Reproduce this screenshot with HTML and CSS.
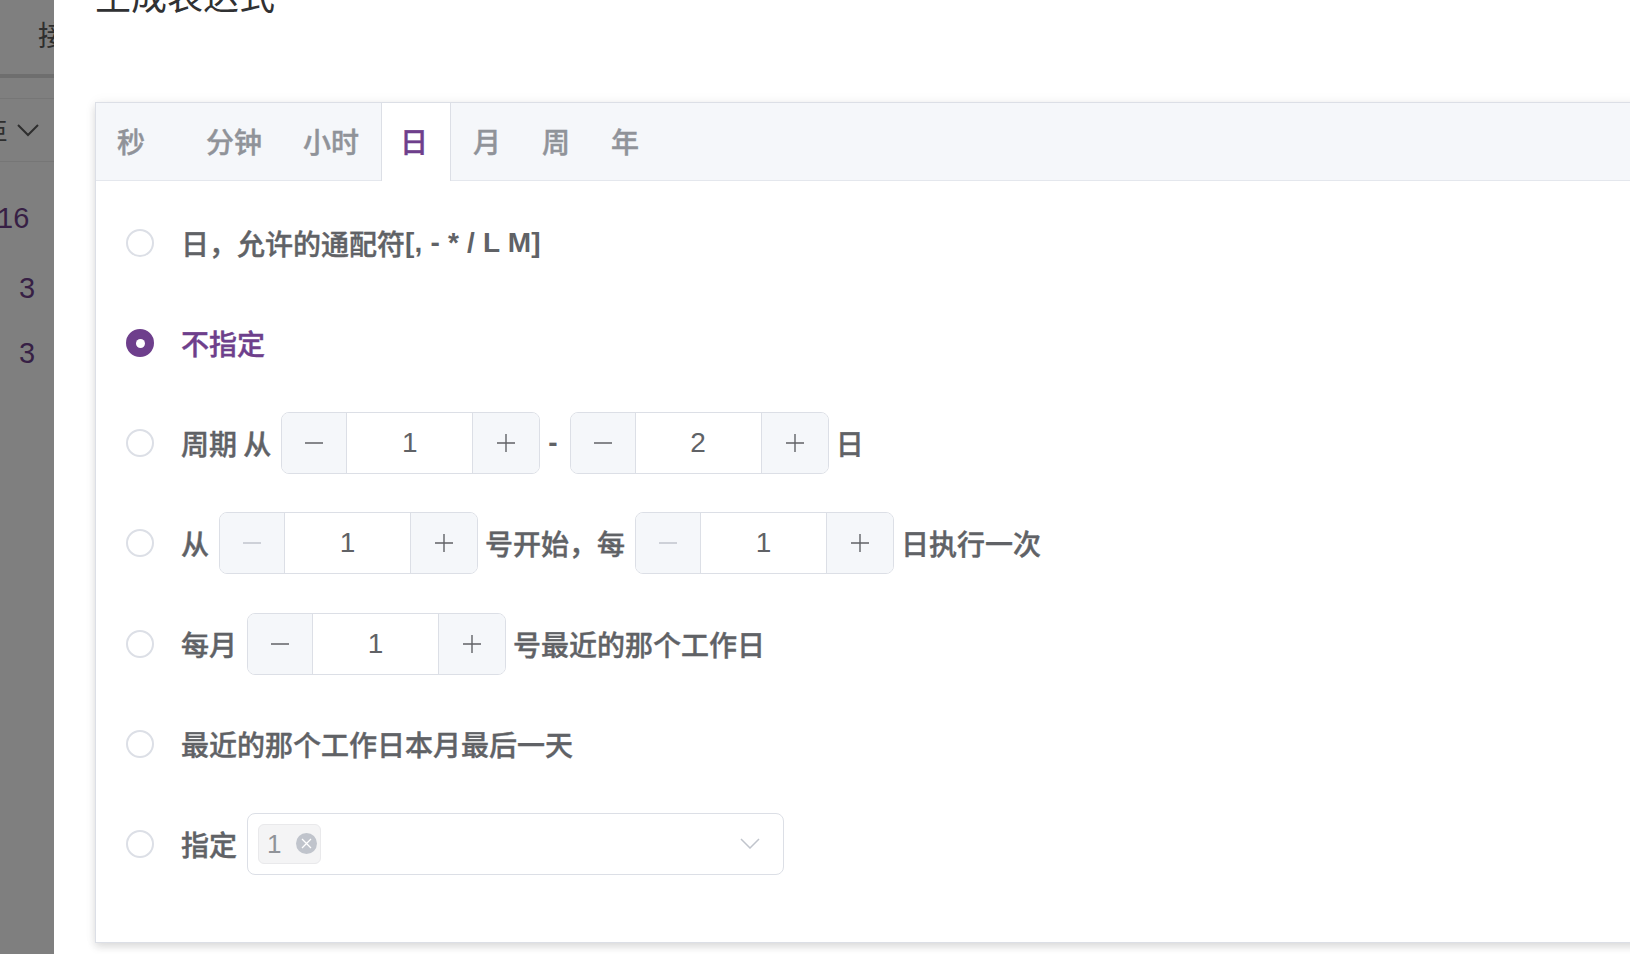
FILE: index.html
```html
<!DOCTYPE html>
<html lang="zh-CN">
<head>
<meta charset="utf-8">
<title>生成表达式</title>
<link rel="stylesheet" href="styles.css">
</head>
<body>
<div class="screen">
  <aside class="under">
    <div class="under-top"><span class="under-op">接口</span></div>
    <div class="under-rule"></div>
    <div class="under-select">
      <span class="under-cut">臣</span>
      <svg class="under-chev" width="22" height="13" viewBox="0 0 22 13"><polyline points="1,1 11,11 21,1" fill="none" stroke="#2e2e2e" stroke-width="2"/></svg>
    </div>
    <div class="under-num n1">16</div>
    <div class="under-num n2">3</div>
    <div class="under-num n3">3</div>
  </aside>

  <main class="drawer">
    <h2 class="drawer-title">生成表达式</h2>
    <section class="card">
      <nav class="tabs">
        <div class="tab tab-first">秒</div>
        <div class="tab">分钟</div>
        <div class="tab tab-before">小时</div>
        <div class="tab is-active">日</div>
        <div class="tab tab-after">月</div>
        <div class="tab">周</div>
        <div class="tab">年</div>
      </nav>
      <div class="pane">
        <div class="row">
          <span class="radio"></span>
          <span class="label">日，允许的通配符<span class="latin wide">[, - * / L M]</span></span>
        </div>
        <div class="row">
          <span class="radio is-checked"></span>
          <span class="label is-checked">不指定</span>
        </div>
        <div class="row">
          <span class="radio"></span>
          <span class="label">
            <span>周期 从</span>
            <span class="num"><span class="num-btn num-dec"><svg width="20" height="20" viewBox="0 0 20 20"><path d="M1 10h18" stroke="currentColor" stroke-width="1.4"/></svg></span><span class="num-val">1</span><span class="num-btn num-inc"><svg width="20" height="20" viewBox="0 0 20 20"><path d="M1 10h18M10 1v18" stroke="currentColor" stroke-width="1.4"/></svg></span></span>
            <span class="latin dash">-</span>
            <span class="num"><span class="num-btn num-dec"><svg width="20" height="20" viewBox="0 0 20 20"><path d="M1 10h18" stroke="currentColor" stroke-width="1.4"/></svg></span><span class="num-val">2</span><span class="num-btn num-inc"><svg width="20" height="20" viewBox="0 0 20 20"><path d="M1 10h18M10 1v18" stroke="currentColor" stroke-width="1.4"/></svg></span></span>
            <span>日</span>
          </span>
        </div>
        <div class="row">
          <span class="radio"></span>
          <span class="label">
            <span>从</span>
            <span class="num"><span class="num-btn num-dec is-disabled"><svg width="20" height="20" viewBox="0 0 20 20"><path d="M1 10h18" stroke="currentColor" stroke-width="1.4"/></svg></span><span class="num-val">1</span><span class="num-btn num-inc"><svg width="20" height="20" viewBox="0 0 20 20"><path d="M1 10h18M10 1v18" stroke="currentColor" stroke-width="1.4"/></svg></span></span>
            <span>号开始，每</span>
            <span class="num"><span class="num-btn num-dec is-disabled"><svg width="20" height="20" viewBox="0 0 20 20"><path d="M1 10h18" stroke="currentColor" stroke-width="1.4"/></svg></span><span class="num-val">1</span><span class="num-btn num-inc"><svg width="20" height="20" viewBox="0 0 20 20"><path d="M1 10h18M10 1v18" stroke="currentColor" stroke-width="1.4"/></svg></span></span>
            <span>日执行一次</span>
          </span>
        </div>
        <div class="row">
          <span class="radio"></span>
          <span class="label">
            <span>每月</span>
            <span class="num"><span class="num-btn num-dec"><svg width="20" height="20" viewBox="0 0 20 20"><path d="M1 10h18" stroke="currentColor" stroke-width="1.4"/></svg></span><span class="num-val">1</span><span class="num-btn num-inc"><svg width="20" height="20" viewBox="0 0 20 20"><path d="M1 10h18M10 1v18" stroke="currentColor" stroke-width="1.4"/></svg></span></span>
            <span>号最近的那个工作日</span>
          </span>
        </div>
        <div class="row">
          <span class="radio"></span>
          <span class="label">最近的那个工作日本月最后一天</span>
        </div>
        <div class="row">
          <span class="radio"></span>
          <span class="label">
            <span>指定</span>
            <span class="select"><span class="tag"><span class="tag-text">1</span><span class="tag-close"><svg width="11" height="11" viewBox="0 0 11 11"><path d="M1 1l9 9M10 1l-9 9" stroke="#fff" stroke-width="1.3"/></svg></span></span><svg class="select-arrow" width="20" height="11" viewBox="0 0 20 11"><polyline points="1,1 10,10 19,1" fill="none" stroke="#c0c4cc" stroke-width="1.5"/></svg></span>
          </span>
        </div>
      </div>
    </section>
  </main>
</div>
</body>
</html>
```

FILE: styles.css
```css
* {
  box-sizing: border-box;
  margin: 0;
  padding: 0;
}

html,
body {
  width: 1630px;
  height: 954px;
  overflow: hidden;
  background: #ffffff;
}

body {
  font-family: "Liberation Sans", "Noto Sans CJK SC", sans-serif;
}

.screen {
  display: flex;
  height: 954px;
}

/* darkened page underneath the drawer */
.under {
  width: 54px;
  flex: none;
  background: #7f7f7f;
  overflow: hidden;
  color: #2e2e2e;
}

.under-top {
  height: 74px;
  padding: 14px 0 0 38px;
  font-family: "Noto Sans CJK SC", sans-serif;
  font-size: 28px;
  line-height: 40px;
  white-space: nowrap;
}

.under-rule {
  height: 4px;
  background: #6e6e6e;
}

.under-select {
  margin-top: 20px;
  height: 64px;
  border-top: 1px solid #767676;
  border-bottom: 1px solid #767676;
  display: flex;
  align-items: center;
  white-space: nowrap;
}

.under-cut {
  font-family: "Noto Sans CJK SC", sans-serif;
  font-size: 24px;
  line-height: 30px;
  margin-left: -16px;
  flex: none;
}

.under-chev {
  flex: none;
  margin-left: 9px;
}

.under-num {
  font-size: 29px;
  line-height: 40px;
  color: #371f45;
  white-space: nowrap;
}

.n1 {
  margin-top: 36px;
  margin-left: -3px;
}

.n2 {
  margin-top: 30px;
  padding-left: 19px;
}

.n3 {
  margin-top: 25px;
  padding-left: 19px;
}

/* drawer */
.drawer {
  flex: 1;
  min-width: 0;
  overflow: hidden;
  padding-left: 41px;
  background: #ffffff;
}

.drawer-title {
  margin-top: -24px;
  height: 36px;
  font-family: "Noto Sans CJK SC", sans-serif;
  font-size: 36px;
  line-height: 36px;
  font-weight: 400;
  color: #303133;
  white-space: nowrap;
}

.card {
  margin-top: 90px;
  width: 1600px;
  height: 841px;
  background: #ffffff;
  border: 1px solid #dcdfe6;
  box-shadow: 0 4px 8px 0 rgba(0, 0, 0, 0.12), 0 0 12px 0 rgba(0, 0, 0, 0.05);
}

.tabs {
  display: flex;
  height: 78px;
  background: #f5f7fa;
  border-bottom: 1px solid #e4e7ed;
}

.tab {
  height: 77px;
  line-height: 77px;
  padding: 0 20px;
  margin-left: -1px;
  border-left: 1px solid transparent;
  border-right: 1px solid transparent;
  font-family: "Noto Sans CJK SC", sans-serif;
  font-size: 28px;
  font-weight: 500;
  color: #909399;
  -webkit-text-stroke: 0.4px currentColor;
  white-space: nowrap;
}

.tab-first {
  margin-left: 0;
  padding-right: 40px;
}

.tab-before {
  padding-right: 22px;
}

.tab.is-active {
  height: 78px;
  padding: 0 22px 0 18px;
  background: #ffffff;
  color: #6e3f8c;
  border-left-color: #dcdfe6;
  border-right-color: #dcdfe6;
}

.tab-after {
  padding-left: 22px;
}

.pane {
  padding: 31px 0 0 0;
}

.row {
  display: flex;
  align-items: center;
  height: 62px;
  margin-bottom: 38.15px;
  padding-left: 30px;
}

.row:last-child {
  margin-bottom: 0;
}

.radio {
  flex: none;
  width: 28px;
  height: 28px;
  border: 2px solid #dcdfe6;
  border-radius: 50%;
  margin-right: 27px;
  display: flex;
  align-items: center;
  justify-content: center;
}

.radio.is-checked {
  background: #6e3f8c;
  border-color: #6e3f8c;
}

.radio.is-checked::after {
  content: "";
  width: 9px;
  height: 9px;
  border-radius: 50%;
  background: #ffffff;
}

.label {
  display: flex;
  align-items: center;
  font-family: "Noto Sans CJK SC", sans-serif;
  font-size: 28px;
  line-height: 40px;
  font-weight: 500;
  color: #606266;
  -webkit-text-stroke: 0.4px currentColor;
  white-space: nowrap;
}

.label.is-checked {
  color: #6e3f8c;
}

.latin {
  font-family: "Liberation Sans", sans-serif;
  font-weight: 700;
  -webkit-text-stroke: 0;
  white-space: pre;
}

.wide {
  letter-spacing: 0.2px;
}

.dash {
  margin: 0 2px 0 1px;
}

.num {
  display: inline-flex;
  flex: none;
  width: 259px;
  height: 62px;
  margin: 0 7px 0 10px;
  border: 1px solid #dcdfe6;
  border-radius: 8px;
  overflow: hidden;
  background: #ffffff;
  -webkit-text-stroke: 0;
}

.num-btn {
  flex: none;
  width: 65px;
  display: flex;
  align-items: center;
  justify-content: center;
  background: #f5f7fa;
  color: #606266;
}

.num-btn.is-disabled {
  color: #c0c4cc;
}

.num-dec {
  border-right: 1px solid #dcdfe6;
}

.num-inc {
  width: 67px;
  border-left: 1px solid #dcdfe6;
}

.num-val {
  flex: 1;
  display: flex;
  align-items: center;
  justify-content: center;
  font-family: "Liberation Sans", sans-serif;
  font-size: 28px;
  font-weight: 400;
  color: #606266;
}

.select {
  display: inline-flex;
  flex: none;
  align-items: center;
  width: 537px;
  height: 62px;
  margin-left: 10px;
  padding: 0 23px 0 10px;
  border: 1px solid #dcdfe6;
  border-radius: 8px;
  -webkit-text-stroke: 0;
}

.tag {
  display: inline-flex;
  align-items: center;
  height: 40px;
  padding: 0 3px 0 8px;
  background: #f4f4f5;
  border: 1px solid #e9e9eb;
  border-radius: 6px;
  color: #909399;
  font-family: "Liberation Sans", sans-serif;
  font-size: 26px;
  font-weight: 400;
}

.tag-close {
  display: flex;
  align-items: center;
  justify-content: center;
  width: 21px;
  height: 21px;
  margin-left: 15px;
  border-radius: 50%;
  background: #c0c4cc;
}

.select-arrow {
  margin-left: auto;
}
```
